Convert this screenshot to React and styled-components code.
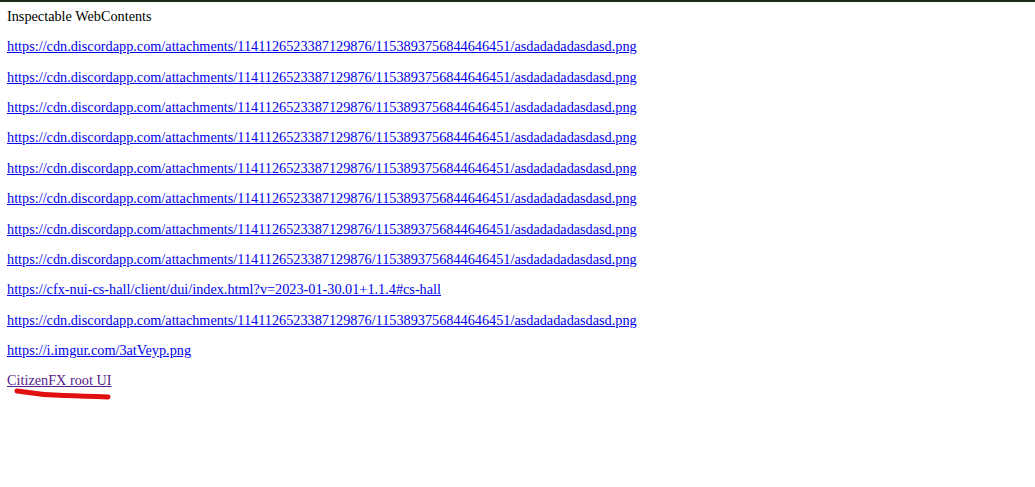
import styled, { createGlobalStyle } from 'styled-components';

const GlobalStyle = createGlobalStyle`
  html, body {
    margin: 0;
    padding: 0;
    background: #ffffff;
  }
`;

const Page = styled.div`
  min-height: 487px;
  box-sizing: border-box;
  border-top: 2px solid #1e2b1c;
  padding: 6px 7px 0;
  font-family: "Liberation Serif", "Times New Roman", serif;
  font-size: 14.25px;
  color: #000;
`;

const Title = styled.div`
  line-height: 16px;
`;

const LinkList = styled.div`
  display: flex;
  flex-direction: column;
  gap: 14.36px;
  margin-top: 14.36px;
`;

const Row = styled.div`
  position: relative;
  line-height: 16px;
  width: max-content;
`;

const Link = styled.a`
  color: ${({ $visited }) => ($visited ? '#551a8b' : '#0000ee')};
  text-decoration: underline;
`;

// red marker stroke drawn over the page under the last link
const Scribble = styled.svg`
  position: absolute;
  left: 7px;
  top: 15px;
  width: 100px;
  height: 14px;
  pointer-events: none;
`;

const discord =
  'https://cdn.discordapp.com/attachments/1141126523387129876/1153893756844646451/asdadadadasdasd.png';

const links = [
  discord,
  discord,
  discord,
  discord,
  discord,
  discord,
  discord,
  discord,
  'https://cfx-nui-cs-hall/client/dui/index.html?v=2023-01-30.01+1.1.4#cs-hall',
  discord,
  'https://i.imgur.com/3atVeyp.png',
];

export default function App() {
  return (
    <>
      <GlobalStyle />
      <Page>
        <Title>Inspectable WebContents</Title>
        <LinkList>
          {links.map((href, i) => (
            <Row key={i}>
              <Link href="#">{href}</Link>
            </Row>
          ))}
          <Row>
            <Link href="#" $visited>CitizenFX root UI</Link>
            <Scribble viewBox="0 0 100 14">
              <path
                d="M3 4 C 15 6, 30 8, 50 8.5 S 82 9.5, 94 10"
                fill="none"
                stroke="#e01010"
                strokeWidth="5"
                strokeLinecap="round"
              />
            </Scribble>
          </Row>
        </LinkList>
      </Page>
    </>
  );
}
